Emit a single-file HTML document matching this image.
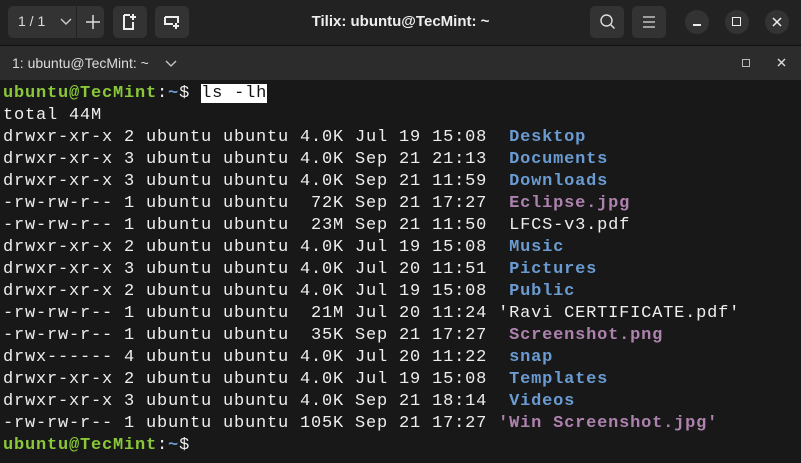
<!DOCTYPE html>
<html><head><meta charset="utf-8"><style>
body{margin:0;width:801px;height:463px;overflow:hidden;background:#181818;font-family:"Liberation Sans",sans-serif}
.title{position:absolute;left:0;top:0;width:801px;height:45px;background:#222;border-bottom:1px solid #111}
.btn{position:absolute;top:6px;height:32px;background:#333;border-radius:5px;color:#ddd}
.tabbar{position:absolute;left:0;top:46px;width:801px;height:34px;background:#2c2c2c;color:#ddd;font-size:14px}
.term{position:absolute;left:3px;top:83px;font-family:"Liberation Mono",monospace;font-size:17px;letter-spacing:0.8px;line-height:22px;color:#eee;white-space:pre}
.g{color:#8ac83a;font-weight:bold}.b{color:#6a9bd2;font-weight:bold}.m{color:#ae82ae;font-weight:bold}
.circ{position:absolute;top:10px;width:24px;height:24px;border-radius:50%;background:#333}
</style></head><body>
<div class="title">
 <div class="btn" style="left:8px;width:96px"><span style="position:absolute;left:10px;top:7px;font-size:14px">1 / 1</span>
  <svg style="position:absolute;left:52px;top:12px" width="12" height="8"><path d="M1 1l5 5 5-5" stroke="#ccc" fill="none" stroke-width="1.4"/></svg>
  <div style="position:absolute;left:68px;top:0;width:1px;height:32px;background:#222"></div>
  <svg style="position:absolute;left:78px;top:9px" width="14" height="14"><path d="M7 0v14M0 7h14" stroke="#ddd" stroke-width="1.5"/></svg></div>
 <div class="btn" style="left:113px;width:34px"><svg style="position:absolute;left:10px;top:8px" width="14" height="16"><path d="M1 1h6M1 1v14h9v-7" stroke="#eee" fill="none" stroke-width="2"/><path d="M10 0v6M7 3h6" stroke="#eee" stroke-width="2"/></svg></div>
 <div class="btn" style="left:155px;width:34px"><svg style="position:absolute;left:9px;top:10px" width="16" height="13"><path d="M1 1h13v6M1 1v7h8" stroke="#eee" fill="none" stroke-width="2"/><path d="M12 7v6M9 10h6" stroke="#eee" stroke-width="2"/></svg></div>
 <div style="position:absolute;left:0;width:801px;top:13px;text-align:center;color:#eee;font-weight:bold;font-size:15px">Tilix: ubuntu@TecMint: ~</div>
 <div class="btn" style="left:590px;width:34px"><svg style="position:absolute;left:10px;top:8px" width="16" height="16"><circle cx="6.5" cy="6.5" r="5.5" stroke="#ddd" fill="none" stroke-width="1.4"/><path d="M10.5 10.5l4 4" stroke="#ddd" stroke-width="1.5"/></svg></div>
 <div class="btn" style="left:632px;width:34px"><svg style="position:absolute;left:11px;top:10px" width="12" height="12"><path d="M0 1h12M0 6h12M0 11h12" stroke="#ddd" stroke-width="1.3"/></svg></div>
 <div class="circ" style="left:685px"><div style="position:absolute;left:8px;top:14px;width:8px;height:2px;background:#eee"></div></div>
 <div class="circ" style="left:725px"><div style="position:absolute;left:7px;top:7px;width:7px;height:7px;border:1.5px solid #eee"></div></div>
 <div class="circ" style="left:765px"><svg style="position:absolute;left:7px;top:7px" width="10" height="10"><path d="M1 1l8 8M9 1l-8 8" stroke="#eee" stroke-width="1.5"/></svg></div>
</div>
<div class="tabbar">
 <span style="position:absolute;left:12px;top:9px">1: ubuntu@TecMint: ~</span>
 <svg style="position:absolute;left:165px;top:14px" width="12" height="7"><path d="M1 1l5 5 5-5" stroke="#ccc" fill="none" stroke-width="1.3"/></svg>
 <div style="position:absolute;left:742px;top:13px;width:6px;height:6px;border:1px solid #bbb"></div>
 <svg style="position:absolute;left:777px;top:12px" width="9" height="9"><path d="M1 1l7 7M8 1l-7 7" stroke="#ddd" stroke-width="1.4"/></svg>
</div>
<div class="term"><span class="g">ubuntu@TecMint</span>:<span class="b">~</span>$ <span style="background:#fff;color:#111">ls -lh</span>
total 44M
drwxr-xr-x 2 ubuntu ubuntu 4.0K Jul 19 15:08  <span class="b">Desktop</span>
drwxr-xr-x 3 ubuntu ubuntu 4.0K Sep 21 21:13  <span class="b">Documents</span>
drwxr-xr-x 3 ubuntu ubuntu 4.0K Sep 21 11:59  <span class="b">Downloads</span>
-rw-rw-r-- 1 ubuntu ubuntu  72K Sep 21 17:27  <span class="m">Eclipse.jpg</span>
-rw-rw-r-- 1 ubuntu ubuntu  23M Sep 21 11:50  LFCS-v3.pdf
drwxr-xr-x 2 ubuntu ubuntu 4.0K Jul 19 15:08  <span class="b">Music</span>
drwxr-xr-x 3 ubuntu ubuntu 4.0K Jul 20 11:51  <span class="b">Pictures</span>
drwxr-xr-x 2 ubuntu ubuntu 4.0K Jul 19 15:08  <span class="b">Public</span>
-rw-rw-r-- 1 ubuntu ubuntu  21M Jul 20 11:24 'Ravi CERTIFICATE.pdf'
-rw-rw-r-- 1 ubuntu ubuntu  35K Sep 21 17:27  <span class="m">Screenshot.png</span>
drwx------ 4 ubuntu ubuntu 4.0K Jul 20 11:22  <span class="b">snap</span>
drwxr-xr-x 2 ubuntu ubuntu 4.0K Jul 19 15:08  <span class="b">Templates</span>
drwxr-xr-x 3 ubuntu ubuntu 4.0K Sep 21 18:14  <span class="b">Videos</span>
-rw-rw-r-- 1 ubuntu ubuntu 105K Sep 21 17:27 <span class="m">'Win Screenshot.jpg'</span>
<span class="g">ubuntu@TecMint</span>:<span class="b">~</span>$ </div>
</body></html>
